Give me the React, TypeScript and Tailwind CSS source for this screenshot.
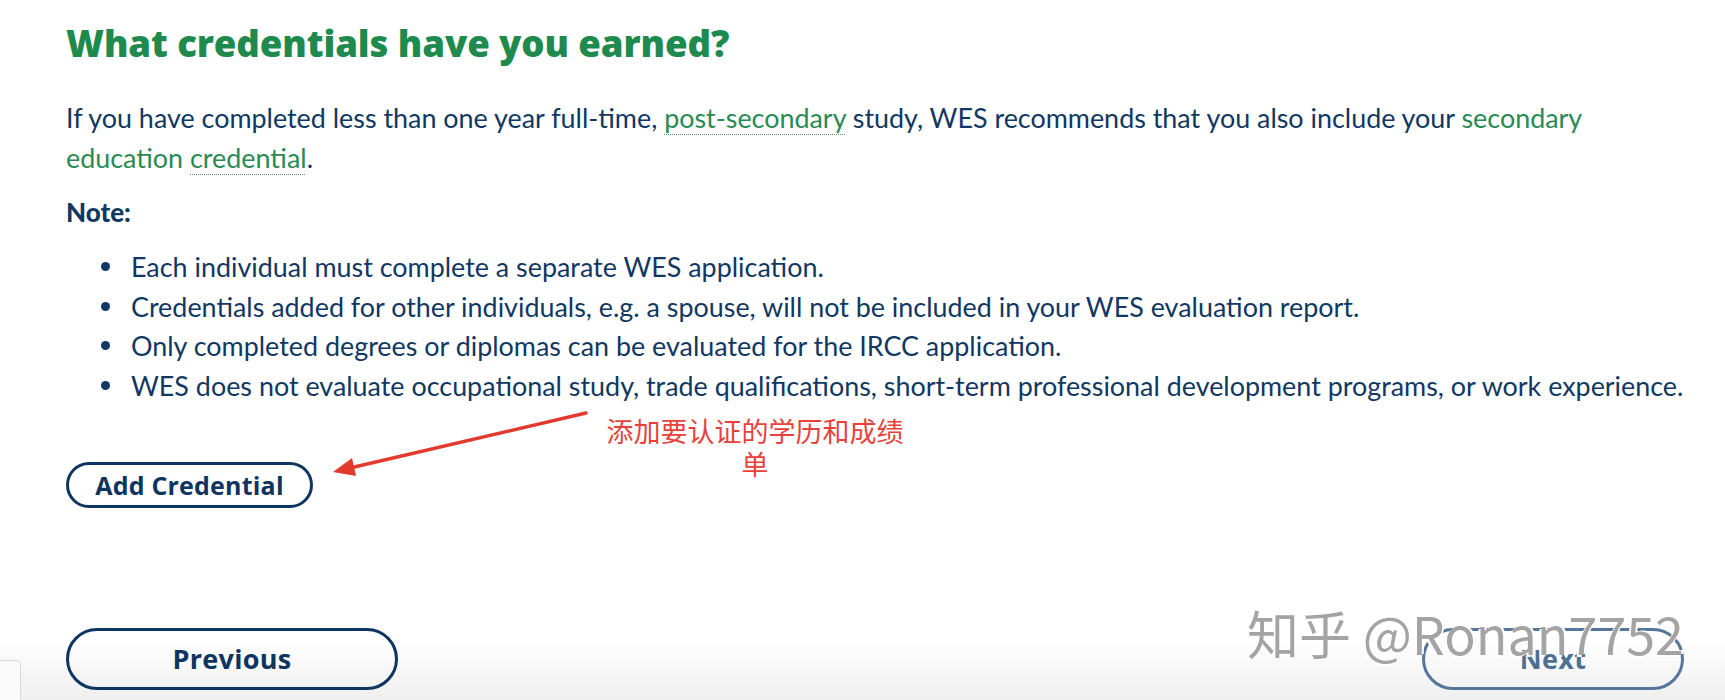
import React from "react";

const body = { fontFamily: "Lato, 'Noto Sans', sans-serif" };
const head = { fontFamily: "'Open Sans', 'Noto Sans', sans-serif" };

export default function App() {
  return (
    <div className="relative w-[1725px] h-[700px] overflow-hidden bg-white">
      <div className="absolute left-0 right-0 bottom-0 h-[60px] bg-gradient-to-b from-white to-[#efefef]" />
      <div className="absolute left-0 bottom-0 w-[21px] h-[40px] rounded-tr-[5px] border border-l-0 border-b-0 border-[#d9d9d9] bg-[#fbfbfb]" />

      <div className="relative pl-[66px] pr-[28px] pt-[20px]">
        <h1 style={head} className="text-[36.6px] leading-[46px] font-extrabold text-[#1e8a4e] tracking-[-0.1px]">
          What credentials have you earned?
        </h1>

        <p style={body} className="mt-[32px] w-[1580px] text-[26.9px] leading-[39.5px] text-[#113862]">
          If you have completed less than one year full-time,{" "}
          <span className="text-[#2a8a55] underline decoration-dotted decoration-[#5f8f78] decoration-1 underline-offset-[6px]">post-secondary</span>{" "}
          study, WES recommends that you also include your{" "}
          <span className="text-[#2a8a55]">secondary education</span>{" "}
          <span className="text-[#2a8a55] underline decoration-dotted decoration-[#5f8f78] decoration-1 underline-offset-[6px]">credential</span>.
        </p>

        <p style={body} className="mt-[15px] text-[26px] leading-[40px] font-black text-[#113862]">Note:</p>

        <ul style={body} className="mt-[15px] text-[26.9px] leading-[39.6px] text-[#113862]">
          {[
            "Each individual must complete a separate WES application.",
            "Credentials added for other individuals, e.g. a spouse, will not be included in your WES evaluation report.",
            "Only completed degrees or diplomas can be evaluated for the IRCC application.",
            "WES does not evaluate occupational study, trade qualifications, short-term professional development programs, or work experience.",
          ].map((t) => (
            <li key={t} className="flex items-center whitespace-nowrap">
              <span className="ml-[35px] mr-[21px] w-[9px] h-[9px] rounded-full bg-[#113862] shrink-0" />
              <span>{t}</span>
            </li>
          ))}
        </ul>

        <button
          style={head}
          className="mt-[57px] w-[247px] h-[46px] rounded-full border-[3px] border-[#0d3560] text-[25px] tracking-[0.2px] font-bold text-[#0d3560] flex items-center justify-center"
        >
          Add Credential
        </button>

        <div className="mt-[120px] flex justify-between w-[1618px]">
          <button
            style={head}
            className="w-[332px] h-[62px] rounded-full border-[3px] border-[#0d3560] text-[27px] tracking-[0.3px] font-bold text-[#0d3560] flex items-center justify-center"
          >
            Previous
          </button>
          <button
            style={head}
            className="w-[262px] h-[62px] rounded-full border-[3px] border-[#54769a] text-[27px] tracking-[0.3px] font-bold text-[#4d6f93] flex items-center justify-center"
          >
            Next
          </button>
        </div>
      </div>

      {/* annotation */}
      <svg className="absolute left-0 top-0 pointer-events-none" width="1725" height="700">
        <line x1="586" y1="413" x2="350" y2="468" stroke="#e23b2e" strokeWidth="3.5" strokeLinecap="round" />
        <polygon points="333,472 352,458 356,476" fill="#e23b2e" />
      </svg>
      <div
        className="absolute left-[600px] top-[414px] w-[310px] text-center text-[27px] leading-[33px] text-[#e8413c]"
        style={{ fontFamily: "'Noto Sans CJK SC', sans-serif" }}
      >
        添加要认证的学历和成绩单
      </div>

      {/* watermark */}
      <div
        className="absolute left-[1247px] top-[598px] text-[52px] leading-[70px] text-[#a4a4a4] whitespace-nowrap [text-shadow:-2px_2px_0_#ffffff,2px_-1px_0_#ffffff]"
        style={{ fontFamily: "'Noto Sans CJK SC', sans-serif", fontWeight: 400 }}
      >
        知乎 @Ronan7752
      </div>
    </div>
  );
}
